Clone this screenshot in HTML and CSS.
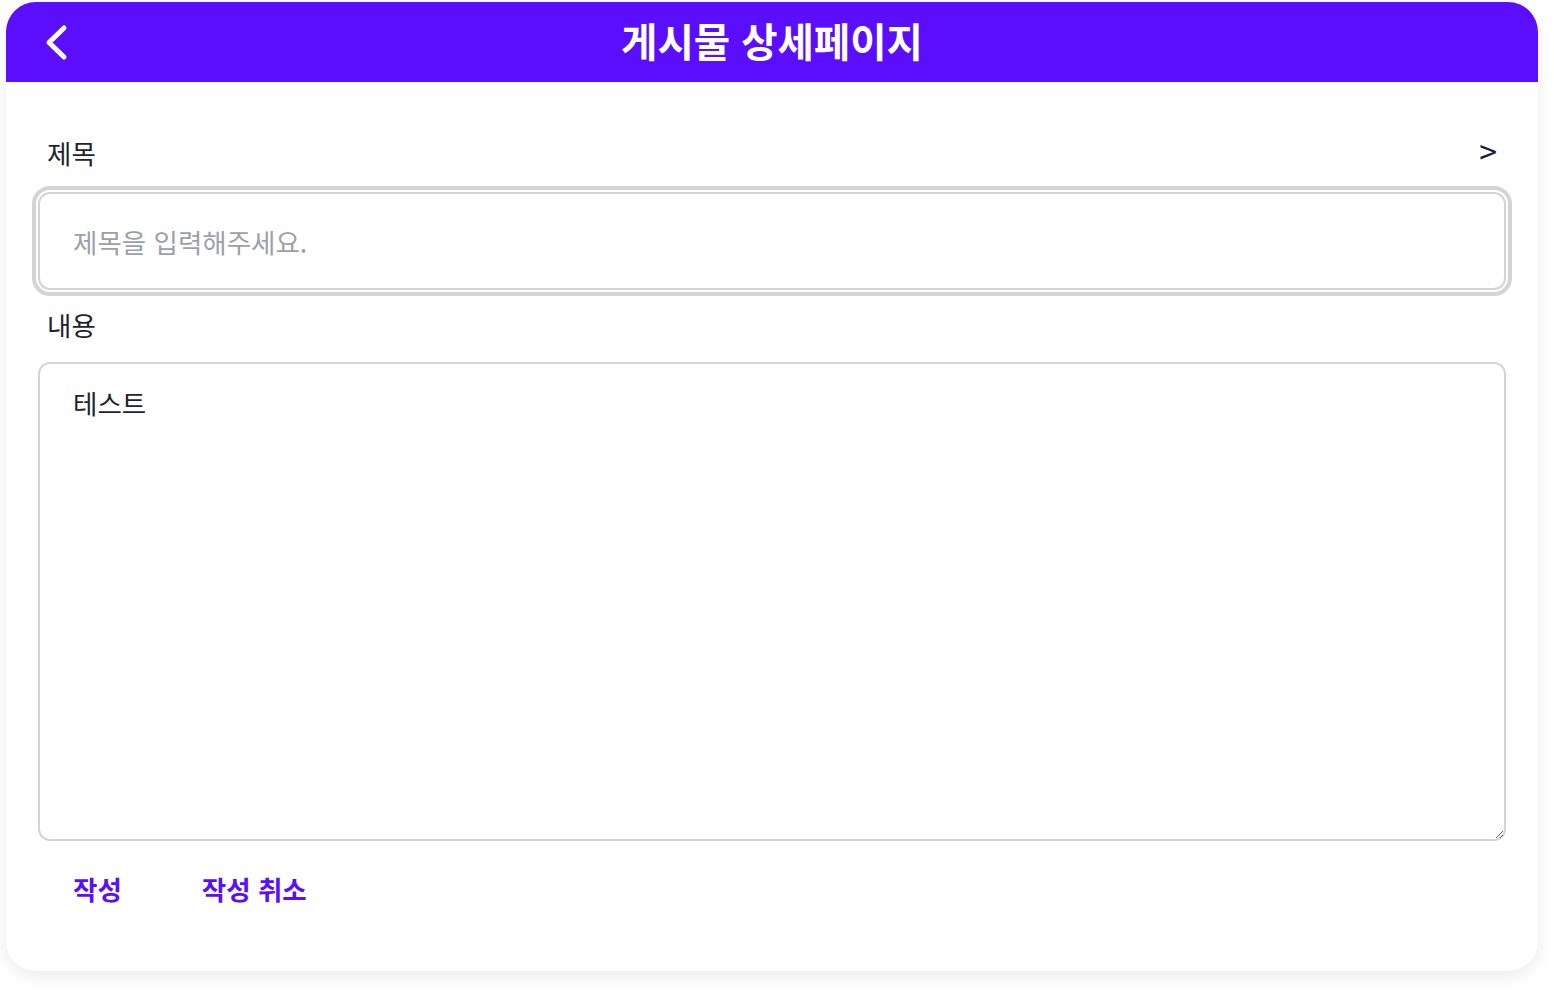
FILE: index.html
```html
<!DOCTYPE html>
<html lang="ko">
<head>
<meta charset="utf-8">
<title>게시물 상세페이지</title>
<link rel="stylesheet" href="styles.css">
</head>
<body>
<div class="card">
  <header class="header">
    <button class="back" aria-label="뒤로">
      <svg width="30" height="40" viewBox="0 0 30 40"><path d="M20 5 L5 19.5 L20 34" fill="none" stroke="#fff" stroke-width="5" stroke-linecap="round" stroke-linejoin="round"/></svg>
    </button>
    <h1 class="title">게시물 상세페이지</h1>
    <div class="spacer"></div>
  </header>
  <main class="body">
    <div class="label-row">
      <span class="label">제목</span>
      <span class="label next">&gt;</span>
    </div>
    <input class="title-input" type="text" placeholder="제목을 입력해주세요.">
    <div class="label-row label-row-2">
      <span class="label">내용</span>
    </div>
    <textarea class="content">테스트</textarea>
    <div class="actions">
      <button class="action">작성</button>
      <button class="action">작성 취소</button>
    </div>
  </main>
</div>
</body>
</html>
```
FILE: styles.css
```css
* { box-sizing: border-box; }
html, body { background: #fff; }
body {
  margin: 0;
  padding: 2px 16px 24px 6px;
  font-family: "Noto Sans CJK KR", "Noto Sans", sans-serif;
  color: #1f2330;
}
.card {
  width: 1532px;
  border-radius: 30px;
  background: #fff;
  box-shadow: 0 6px 16px rgba(0, 0, 0, 0.08);
  overflow: hidden;
}
.header {
  height: 80px;
  background: #5a0efc;
  display: grid;
  grid-template-columns: 1fr auto 1fr;
  align-items: center;
}
.back {
  justify-self: start;
  margin-left: 38px;
  margin-top: 1px;
  padding: 0;
  border: 0;
  background: none;
  display: flex;
}
.title {
  margin: -4px 0 0;
  color: #fff;
  font-size: 39.5px;
  font-weight: 700;
  line-height: 1;
}
.body {
  padding: 53px 32px 65px;
}
.label-row {
  display: flex;
  justify-content: space-between;
  align-items: center;
  padding: 0 9px;
  margin-bottom: 22px;
}
.label {
  font-size: 26.5px;
  line-height: 35px;
}
.next {
  font-size: 32px;
  color: #1a1f36;
  margin-top: -4px;
}
.label-row-2 {
  margin-top: 17px;
  margin-bottom: 20px;
}
.title-input {
  display: block;
  width: 100%;
  height: 98px;
  padding: 0 33px;
  border: 2px solid #d4d4d8;
  border-radius: 12px;
  box-shadow: 0 0 0 2px #fff, 0 0 0 6px #d4d4d8;
  font-family: inherit;
  font-size: 26.5px;
  color: #1f2330;
  outline: none;
}
.title-input::placeholder { color: #9ca0a8; }
.content {
  display: block;
  width: 100%;
  height: 479px;
  padding: 21px 33px;
  border: 2px solid #d4d4d8;
  border-radius: 12px;
  font-family: inherit;
  font-size: 26.5px;
  line-height: 35px;
  color: #1f2330;
  outline: none;
}
.actions {
  display: flex;
  gap: 80px;
  margin-top: 30px;
  padding-left: 35px;
}
.action {
  padding: 0;
  border: 0;
  background: none;
  font-family: inherit;
  font-size: 26.5px;
  font-weight: 700;
  line-height: 35px;
  color: #5a0efc;
  cursor: pointer;
}
```
